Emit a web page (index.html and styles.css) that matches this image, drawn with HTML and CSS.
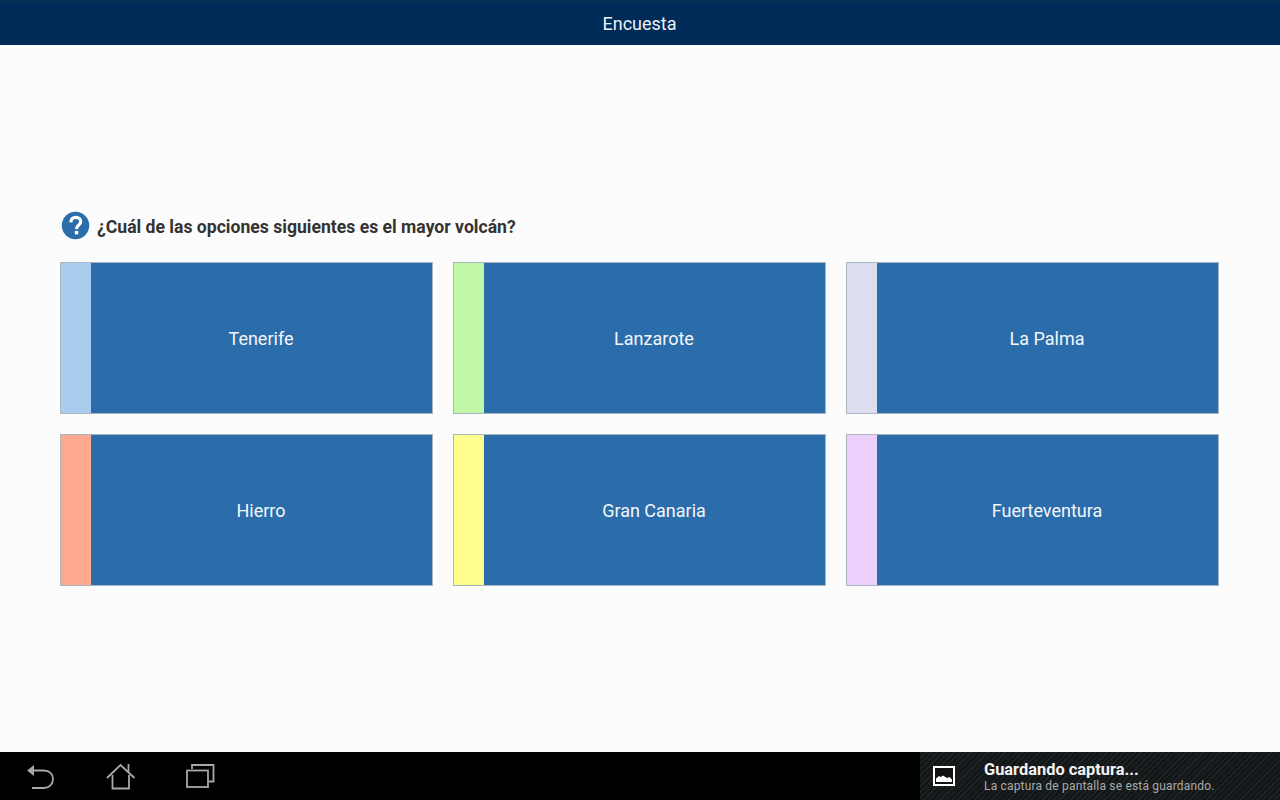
FILE: index.html
```html
<!DOCTYPE html>
<html lang="es">
<head>
  <meta charset="UTF-8" />
  <title>Encuesta</title>
  <link rel="stylesheet" href="styles.css">
</head>
<body>
  <div class="titulo-bar">Encuesta</div>

  <div class="contenido">
    <div class="pregunta">
      <svg class="icono-pregunta" viewBox="0 0 30 30" width="30" height="30">
        <circle cx="14.500" cy="14.500" r="13.700" fill="#2b6cab" />
        <path d="M9.800 11.400c.2-3.200 2.300-5 5-5 2.800 0 4.900 1.700 4.900 4.300 0 3.500-4.200 3.700-4.200 7.200" fill="none" stroke="#fff" stroke-width="3.200" />
        <rect x="13.800" y="19.800" width="3.400" height="3.600" fill="#fff" />
      </svg>
      <span class="pregunta-texto">¿Cuál de las opciones siguientes es el mayor volcán?</span>
    </div>

    <div class="opciones">
      <div class="opcion"><div class="color c-azul"></div><div class="nombre">Tenerife</div></div>
      <div class="opcion"><div class="color c-verde"></div><div class="nombre">Lanzarote</div></div>
      <div class="opcion"><div class="color c-lavanda"></div><div class="nombre">La Palma</div></div>
      <div class="opcion"><div class="color c-salmon"></div><div class="nombre">Hierro</div></div>
      <div class="opcion"><div class="color c-amarillo"></div><div class="nombre">Gran Canaria</div></div>
      <div class="opcion"><div class="color c-lila"></div><div class="nombre">Fuerteventura</div></div>
    </div>
  </div>

  <div class="nav-bar">
    <div class="nav-botones">
      <svg viewBox="0 0 40 32" width="40" height="32">
        <path d="M14 5 7 10.500 14 16Z" fill="#a8a8a8" />
        <path d="M14 10.500H24C29.500 10.500 33 14 33 19S29.500 28 24 28H12" fill="none" stroke="#a8a8a8" stroke-width="1.800" />
      </svg>
      <svg viewBox="0 0 40 32" width="40" height="32">
        <path d="M7 18 20.500 5 34.500 18" fill="none" stroke="#a8a8a8" stroke-width="1.800" />
        <path d="M12.500 15V28.500H29V15M28.500 4V12" fill="none" stroke="#a8a8a8" stroke-width="1.800" />
      </svg>
      <svg viewBox="0 0 40 32" width="40" height="32">
        <rect x="7" y="10.500" width="21" height="16.500" fill="none" stroke="#a8a8a8" stroke-width="1.800" />
        <path d="M12 9V5H33.500V21.500H29" fill="none" stroke="#a8a8a8" stroke-width="1.800" />
      </svg>
    </div>

    <div class="notificacion">
      <svg class="icono-imagen" viewBox="0 0 22 20" width="22" height="20">
        <rect x="1" y="1" width="20" height="18" fill="#111" stroke="#fff" stroke-width="2" />
        <path d="M3 16V12.500L6 10 8 11 10 9.500 14 12 16.500 11 19 13.500V16Z" fill="#fff" />
      </svg>
      <div class="notificacion-texto">
        <div class="notificacion-titulo">Guardando captura...</div>
        <div class="notificacion-sub">La captura de pantalla se está guardando.</div>
      </div>
    </div>
  </div>
</body>
</html>
```

FILE: styles.css
```css
html, body {
  height: 100%;
}

body {
  font-family: Roboto, "Liberation Sans", sans-serif;
  background-color: #fcfcfc;
  color: #333;
  margin: 0;
  padding: 0;
  display: flex;
  flex-direction: column;
  overflow: hidden;
}

.titulo-bar {
  height: 45px;
  box-sizing: border-box;
  padding: 2px 1px 0 0;
  background: linear-gradient(#0c3157 0, #002b59 4px);
  color: #eaf2f8;
  font-size: 18px;
  line-height: 43px;
  text-align: center;
}

.contenido {
  flex: 1;
  padding: 165px 61px 0 60px;
}

.pregunta {
  display: flex;
  align-items: center;
  gap: 6px;
  height: 32px;
  margin-bottom: 20px;
  font-size: 17.6px;
  font-weight: bold;
}

.pregunta-texto {
  padding-top: 2px;
}

.icono-pregunta {
  display: block;
  margin-left: 1px;
}

.opciones {
  display: grid;
  grid-template-columns: repeat(3, 373px);
  grid-auto-rows: 152px;
  gap: 20px;
}

.opcion {
  display: flex;
  box-sizing: border-box;
  background-color: #2b6cab;
  border: 1px solid #a9b6c2;
}

.color {
  width: 30px;
}

.c-azul { background-color: #a8cdee; }
.c-verde { background-color: #c0f8a8; }
.c-lavanda { background-color: #dcdeef; }
.c-salmon { background-color: #fea98e; }
.c-amarillo { background-color: #fefe8e; }
.c-lila { background-color: #eccffb; }

.nombre {
  flex: 1;
  display: flex;
  align-items: center;
  justify-content: center;
  padding-right: 1px;
  color: #f4f7fa;
  font-size: 18px;
}

.nav-bar {
  height: 48px;
  background-color: #000;
  display: flex;
  justify-content: space-between;
}

.nav-botones {
  display: flex;
  align-items: center;
  gap: 40px;
  padding-left: 20px;
}

.nav-botones svg {
  display: block;
}

.notificacion {
  width: 360px;
  display: flex;
  align-items: center;
  background-color: #141718;
  background-image: repeating-linear-gradient(135deg, #202527 0, #202527 1px, transparent 1px, transparent 4px);
}

.icono-imagen {
  display: block;
  margin-left: 13px;
}

.notificacion-texto {
  margin-left: 29px;
}

.notificacion-titulo {
  color: #f2f2f2;
  font-size: 16.4px;
  font-weight: bold;
  line-height: 19px;
}

.notificacion-sub {
  color: #aaa;
  font-size: 12px;
  letter-spacing: 0.18px;
  line-height: 14px;
}
```
